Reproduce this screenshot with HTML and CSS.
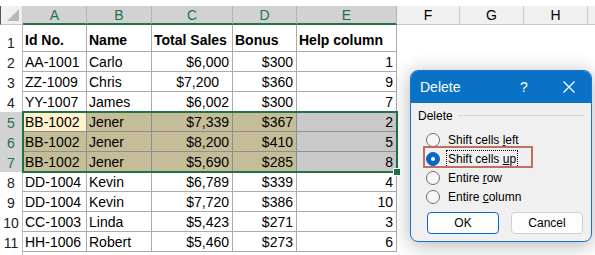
FILE: index.html
```html
<!DOCTYPE html>
<html>
<head>
  <meta charset="UTF-8">
  <title>Delete cells</title>
  <link rel="stylesheet" href="styles.css">
</head>
<body>
  <div class="sheet">
    <div class="grid">
      <div class="corner"><span class="corner-mark"></span></div>
      <div class="colhead sel">A</div>
      <div class="colhead sel">B</div>
      <div class="colhead sel">C</div>
      <div class="colhead sel">D</div>
      <div class="colhead sel">E</div>
      <div class="colhead">F</div>
      <div class="colhead">G</div>
      <div class="colhead">H</div>
      <div class="colhead end"></div>

      <div class="rowhead">1</div>
      <div class="cell head">Id No.</div>
      <div class="cell head">Name</div>
      <div class="cell head">Total Sales</div>
      <div class="cell head">Bonus</div>
      <div class="cell head">Help column</div>
      <div class="blank"></div>

      <div class="rowhead">2</div>
      <div class="cell">AA-1001</div>
      <div class="cell">Carlo</div>
      <div class="cell num">$6,000</div>
      <div class="cell num">$300</div>
      <div class="cell num">1</div>
      <div class="blank"></div>

      <div class="rowhead">3</div>
      <div class="cell">ZZ-1009</div>
      <div class="cell">Chris</div>
      <div class="cell num pad">$7,200</div>
      <div class="cell num">$360</div>
      <div class="cell num">9</div>
      <div class="blank"></div>

      <div class="rowhead">4</div>
      <div class="cell">YY-1007</div>
      <div class="cell">James</div>
      <div class="cell num">$6,002</div>
      <div class="cell num">$300</div>
      <div class="cell num">7</div>
      <div class="blank"></div>

      <div class="rowhead sel">5</div>
      <div class="cell active">BB-1002</div>
      <div class="cell tan">Jener</div>
      <div class="cell tan num">$7,339</div>
      <div class="cell tan num">$367</div>
      <div class="cell grey num">2</div>
      <div class="blank"></div>

      <div class="rowhead sel">6</div>
      <div class="cell tan">BB-1002</div>
      <div class="cell tan">Jener</div>
      <div class="cell tan num">$8,200</div>
      <div class="cell tan num">$410</div>
      <div class="cell grey num">5</div>
      <div class="blank"></div>

      <div class="rowhead sel">7</div>
      <div class="cell tan">BB-1002</div>
      <div class="cell tan">Jener</div>
      <div class="cell tan num">$5,690</div>
      <div class="cell tan num">$285</div>
      <div class="cell grey num">8</div>
      <div class="blank"></div>

      <div class="rowhead">8</div>
      <div class="cell">DD-1004</div>
      <div class="cell">Kevin</div>
      <div class="cell num">$6,789</div>
      <div class="cell num">$339</div>
      <div class="cell num">4</div>
      <div class="blank"></div>

      <div class="rowhead">9</div>
      <div class="cell">DD-1004</div>
      <div class="cell">Kevin</div>
      <div class="cell num">$7,720</div>
      <div class="cell num">$386</div>
      <div class="cell num">10</div>
      <div class="blank"></div>

      <div class="rowhead">10</div>
      <div class="cell">CC-1003</div>
      <div class="cell">Linda</div>
      <div class="cell num">$5,423</div>
      <div class="cell num">$271</div>
      <div class="cell num">3</div>
      <div class="blank"></div>

      <div class="rowhead">11</div>
      <div class="cell">HH-1006</div>
      <div class="cell">Robert</div>
      <div class="cell num">$5,460</div>
      <div class="cell num">$273</div>
      <div class="cell num">6</div>
      <div class="blank"></div>

      <div class="rowhead"></div>
      <div class="blank tail"></div>
    </div>

    <!-- selected range A5:E7 -->
    <div class="selection"><span class="fill-handle"></span></div>

    <div class="dialog">
      <div class="dialog-title">
        <span class="dialog-name">Delete</span>
        <span class="dialog-help">?</span>
        <svg class="dialog-close" width="14" height="14" viewBox="0 0 14 14">
          <path d="M1.5 1.5 L12.5 12.5 M12.5 1.5 L1.5 12.5" stroke="#fff" stroke-width="1.2" fill="none"/>
        </svg>
      </div>
      <div class="dialog-body">
        <div class="group-label"><span>Delete</span><span class="group-line"></span></div>
        <div class="option"><span class="radio"></span><span>Shift cells <u>l</u>eft</span></div>
        <div class="option checked"><span class="radio"></span><span class="focus">Shift cells <u>u</u>p</span></div>
        <div class="option"><span class="radio"></span><span>Entire <u>r</u>ow</span></div>
        <div class="option"><span class="radio"></span><span>Entire <u>c</u>olumn</span></div>
        <div class="buttons">
          <button class="btn primary">OK</button>
          <button class="btn">Cancel</button>
        </div>
      </div>
      <div class="highlight"></div>
    </div>
  </div>
</body>
</html>
```

FILE: styles.css
```css
body {
  margin: 0;
  background-color: #ffffff;
  font-family: "Liberation Sans", Arial, sans-serif;
  overflow: hidden;
}

.sheet {
  position: relative;
  width: 595px;
  height: 255px;
  padding-top: 6px;
  box-sizing: border-box;
}

.grid {
  display: grid;
  grid-template-columns: 23px 64px 65px 81px 64px 100px 63px 64px 64px 7px;
  grid-template-rows: 19px 27px repeat(10, 20px) 3px;
  font-size: 14px;
  color: #000000;
}

.corner {
  position: relative;
  background-color: #f0f0f0;
  border-right: 1px solid #c8c8c8;
  border-bottom: 1px solid #c8c8c8;
  border-left: 1px solid #555555;
}

.corner-mark {
  position: absolute;
  right: 3px;
  bottom: 3px;
  width: 0;
  height: 0;
  border-left: 12px solid transparent;
  border-bottom: 12px solid #b9b9b9;
}

.colhead {
  display: flex;
  align-items: center;
  justify-content: center;
  background-color: #f0f0f0;
  border-right: 1px solid #c8c8c8;
  border-bottom: 1px solid #c8c8c8;
  box-sizing: border-box;
  font-size: 14px;
}

.colhead.sel {
  background-color: #d2d2d2;
  color: #217346;
  border-right-color: #b4b4b4;
  border-bottom: 2px solid #217346;
}

.colhead.end {
  border-right: none;
}

.rowhead {
  display: flex;
  align-items: flex-end;
  justify-content: center;
  padding-bottom: 1px;
  border-right: 1px solid #bdbdbd;
  background-color: #ffffff;
  font-size: 14px;
  color: #222222;
}

.rowhead.sel {
  background-color: #d2d2d2;
  color: #217346;
}

.cell {
  display: flex;
  align-items: flex-end;
  padding: 0 3px 1px 2px;
  border-right: 1px solid #ababab;
  border-bottom: 1px solid #ababab;
  white-space: nowrap;
  overflow: hidden;
}

.cell.head {
  font-weight: bold;
  padding-bottom: 3px;
}

.cell.num {
  justify-content: flex-end;
}

.cell.pad {
  padding-right: 13px;
}

.cell.active {
  background-color: #fff2cc;
  border-color: #8e8e8e;
}

.cell.tan {
  background-color: #c4bd97;
  border-color: #8e8e8e;
}

.cell.grey {
  background-color: #c9c9c9;
  border-color: #8e8e8e;
}

.blank {
  grid-column: 7 / -1;
}

.blank.tail {
  grid-column: 2 / -1;
}

.selection {
  position: absolute;
  left: 22px;
  top: 111px;
  width: 376px;
  height: 62px;
  border: 2px solid #217346;
  box-sizing: border-box;
}

.fill-handle {
  position: absolute;
  right: -5px;
  bottom: -5px;
  width: 6px;
  height: 6px;
  background-color: #217346;
  border: 1px solid #ffffff;
}

.dialog {
  position: absolute;
  left: 410px;
  top: 70px;
  width: 182px;
  height: 172px;
  border: 1px solid #1a73c4;
  border-radius: 8px;
  background-color: #f0f0f0;
  box-shadow: 0 3px 20px rgba(0, 0, 0, 0.3);
  box-sizing: border-box;
  overflow: hidden;
  font-size: 12px;
  color: #000000;
}

.dialog-title {
  display: flex;
  align-items: center;
  height: 32px;
  padding-left: 9px;
  background-color: #0a72c6;
  color: #ffffff;
  font-size: 14px;
}

.dialog-name {
  flex: 1;
}

.dialog-help {
  width: 8px;
  margin-right: 34px;
  font-size: 14px;
}

.dialog-close {
  margin-right: 15px;
}

.dialog-body {
  padding: 5px 6px 0 7px;
}

.group-label {
  display: flex;
  align-items: center;
  gap: 5px;
  height: 15px;
  margin-bottom: 7px;
}

.group-line {
  flex: 1;
  height: 1px;
  background-color: #d9d9d9;
}

.option {
  display: flex;
  align-items: center;
  gap: 8px;
  height: 19px;
  padding-left: 8px;
}

.radio {
  width: 12px;
  height: 12px;
  border: 1px solid #6e6e6e;
  border-radius: 50%;
  background-color: #f7f7f7;
  box-sizing: content-box;
}

.option.checked .radio {
  position: relative;
  border-color: #0867c4;
  background-color: #0867c4;
}

.option.checked .radio::after {
  content: "";
  position: absolute;
  left: 4px;
  top: 4px;
  width: 4px;
  height: 4px;
  border-radius: 50%;
  background-color: #ffffff;
}

.focus {
  outline: 1px dotted #000000;
  outline-offset: 1px;
}

.buttons {
  display: flex;
  gap: 12px;
  margin-top: 6px;
  padding-left: 9px;
}

.btn {
  width: 72px;
  height: 22px;
  padding: 0;
  border: 1px solid #d0d0d0;
  border-radius: 4px;
  background-color: #fdfdfd;
  font-family: "Liberation Sans", Arial, sans-serif;
  font-size: 12px;
  color: #000000;
}

.btn.primary {
  border-color: #0867c4;
}

.highlight {
  position: absolute;
  left: 12px;
  top: 75px;
  width: 110px;
  height: 22px;
  border: 2px solid #c0705f;
  box-sizing: border-box;
}
```
